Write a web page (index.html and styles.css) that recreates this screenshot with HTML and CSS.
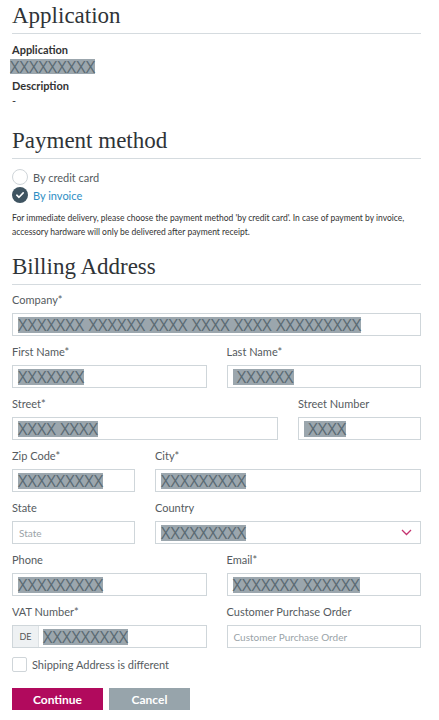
FILE: index.html
```html
<!DOCTYPE html>
<html>
<head>
<meta charset="utf-8">
<link rel="stylesheet" href="styles.css">
</head>
<body>
<div class="page">
  <h2 class="section-title">Application</h2>
  <div class="info-label">Application</div>
  <div class="info-value"><span class="mask">XXXXXXXXX</span></div>
  <div class="info-label info-label-2">Description</div>
  <div class="info-dash">-</div>

  <h2 class="section-title title-payment">Payment method</h2>
  <div class="radios">
    <div class="radio-row">
      <span class="radio"></span>
      <span class="radio-text">By credit card</span>
    </div>
    <div class="radio-row">
      <span class="radio radio-on">
        <svg width="16" height="16" viewBox="0 0 16 16"><path d="M4.8 8.2 L7 10.3 L11.2 5.9" fill="none" stroke="#fff" stroke-width="1.6" stroke-linecap="round" stroke-linejoin="round"/></svg>
      </span>
      <span class="radio-text radio-text-on">By invoice</span>
    </div>
  </div>
  <p class="note">For immediate delivery, please choose the payment method 'by credit card'. In case of payment by invoice, accessory hardware will only be delivered after payment receipt.</p>

  <h2 class="section-title title-billing">Billing Address</h2>

  <div class="field field-first">
    <label class="label">Company*</label>
    <div class="input"><span class="mask">XXXXXXX XXXXXX XXXX XXXX XXXX XXXXXXXXX</span></div>
  </div>

  <div class="row halves">
    <div class="field">
      <label class="label">First Name*</label>
      <div class="input"><span class="mask">XXXXXXX</span></div>
    </div>
    <div class="field">
      <label class="label">Last Name*</label>
      <div class="input"><span class="mask">&nbsp;XXXXXX</span></div>
    </div>
  </div>

  <div class="row thirds">
    <div class="field span2">
      <label class="label">Street*</label>
      <div class="input"><span class="mask">XXXX XXXX</span></div>
    </div>
    <div class="field">
      <label class="label">Street Number</label>
      <div class="input"><span class="mask">&nbsp;XXXX</span></div>
    </div>
  </div>

  <div class="row thirds">
    <div class="field">
      <label class="label">Zip Code*</label>
      <div class="input"><span class="mask">XXXXXXXXX</span></div>
    </div>
    <div class="field span2">
      <label class="label">City*</label>
      <div class="input"><span class="mask">XXXXXXXXX</span></div>
    </div>
  </div>

  <div class="row thirds">
    <div class="field">
      <label class="label">State</label>
      <div class="input"><span class="placeholder">State</span></div>
    </div>
    <div class="field span2">
      <label class="label">Country</label>
      <div class="input select"><span class="mask">XXXXXXXXX</span>
        <svg class="chevron" width="11" height="7" viewBox="0 0 11 7"><path d="M1 1 L5.5 5.5 L10 1" fill="none" stroke="#c4336f" stroke-width="1.3"/></svg>
      </div>
    </div>
  </div>

  <div class="row halves">
    <div class="field">
      <label class="label">Phone</label>
      <div class="input"><span class="mask">XXXXXXXXX</span></div>
    </div>
    <div class="field">
      <label class="label">Email*</label>
      <div class="input"><span class="mask">XXXXXXX XXXXXX</span></div>
    </div>
  </div>

  <div class="row halves">
    <div class="field">
      <label class="label">VAT Number*</label>
      <div class="input vat"><span class="prefix">DE</span><span class="mask">XXXXXXXXX</span></div>
    </div>
    <div class="field">
      <label class="label">Customer Purchase Order</label>
      <div class="input"><span class="placeholder">Customer Purchase Order</span></div>
    </div>
  </div>

  <div class="check-row">
    <span class="checkbox"></span>
    <span class="check-text">Shipping Address is different</span>
  </div>

  <div class="buttons">
    <button class="btn btn-primary">Continue</button>
    <button class="btn btn-secondary">Cancel</button>
  </div>
</div>
</body>
</html>
```

FILE: styles.css
```css
* { box-sizing: border-box; }

body {
  margin: 0;
  background: #ffffff;
  font-family: Lato, "Open Sans", sans-serif;
  color: #444;
}

.page {
  width: 421px;
  padding: 0 0 0 12px;
}

.section-title {
  margin: 0;
  padding: 2px 0 3px;
  font-family: "Liberation Serif", serif;
  font-weight: normal;
  font-size: 23px;
  line-height: 28px;
  color: #2f3438;
  border-bottom: 1px solid #d5dbdf;
}

.title-payment { margin-top: 17px; }
.title-billing { margin-top: 12px; }

.info-label {
  margin-top: 8px;
  font-size: 11px;
  line-height: 15px;
  font-weight: bold;
  color: #333;
}
.info-label-2 { margin-top: 4px; }

.info-value {
  margin-top: 2px;
  margin-left: -2px;
  height: 15px;
  line-height: 15px;
}
.info-value .mask { height: 15px; line-height: 15px; }

.info-dash {
  font-size: 11px;
  line-height: 15px;
  color: #333;
}

.mask {
  display: inline-block;
  height: 16px;
  line-height: 16px;
  background: #9ba6ad;
  color: #5a6a73;
  font-family: "Open Sans", sans-serif;
  font-size: 16.4px;
  white-space: pre;
}

.radios { margin-top: 9px; }

.radio-row {
  display: flex;
  align-items: center;
  gap: 5px;
  height: 18px;
}

.radio {
  width: 16px;
  height: 16px;
  border-radius: 50%;
  border: 1px solid #cfd5d9;
  background: #fff;
  display: flex;
}
.radio-on {
  border: none;
  background: #3f5461;
}

.radio-text {
  font-size: 11px;
  color: #555b60;
}
.radio-text-on { color: #2e8ec4; }

.note {
  margin: 7px 0 0;
  font-size: 8.5px;
  line-height: 14px;
  color: #333;
}

.field-first { margin-top: 7px; }

.field {
  display: flex;
  flex-direction: column;
  margin-bottom: 8px;
  min-width: 0;
}

.label {
  font-size: 11px;
  line-height: 16px;
  color: #555b60;
  margin-bottom: 5px;
}

.row {
  display: grid;
  column-gap: 20px;
}
.halves { grid-template-columns: 1fr 1fr; }
.thirds { grid-template-columns: 1fr 1fr 1fr; }
.span2 { grid-column: span 2; }

.input {
  height: 23px;
  border: 1px solid #cfd6da;
  background: #fff;
  display: flex;
  align-items: center;
  padding: 0 4px 0 5px;
  overflow: hidden;
}

.select {
  justify-content: space-between;
  padding-right: 8px;
}
.chevron { flex: none; }

.placeholder {
  font-size: 10px;
  color: #9aa3a8;
  padding-left: 1px;
}

.vat { padding-left: 0; }
.prefix {
  align-self: stretch;
  width: 26px;
  background: #eef1f3;
  border-right: 1px solid #dde2e5;
  display: flex;
  align-items: center;
  justify-content: center;
  font-size: 9px;
  color: #555;
  margin-right: 4px;
}

.check-row {
  display: flex;
  align-items: center;
  gap: 5px;
  height: 16px;
}
.checkbox {
  width: 15px;
  height: 15px;
  border: 1px solid #cfd5d9;
  border-radius: 2px;
  background: #fff;
}
.check-text {
  font-size: 11px;
  color: #555b60;
}

.buttons {
  display: flex;
  gap: 6px;
  margin-top: 16px;
}

.btn {
  height: 22px;
  border: none;
  padding: 0;
  font-family: Lato, "Open Sans", sans-serif;
  font-weight: bold;
  font-size: 12px;
  color: #fff;
}
.btn-primary { width: 91px; background: #b10a5d; }
.btn-secondary { width: 81px; background: #97a4ab; }
```
